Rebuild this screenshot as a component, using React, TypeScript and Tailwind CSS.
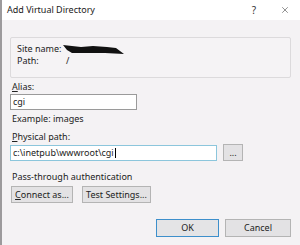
import { X } from 'lucide-react';

const font = { fontFamily: '"Noto Sans", "Open Sans", sans-serif' };

function Btn({ children, w, h = 'h-[17px]', primary }: { children: React.ReactNode; w: string; h?: string; primary?: boolean }) {
  return (
    <div
      className={`${w} ${h} flex items-center justify-center border text-[9px] text-[#222] ${
        primary ? 'border-[#3d8fcb] bg-[#e4e4e6]' : 'border-[#b4b4b4] bg-[#e3e2e4]'
      }`}
    >
      {children}
    </div>
  );
}

export default function App() {
  return (
    <div
      className="flex h-[245px] w-[300px] flex-col border-l-2 border-[#9c9a9c] bg-[#f4f2f4] text-[9px] leading-[12px] text-[#222]"
      style={font}
    >
      {/* Title bar */}
      <div className="flex h-[20px] items-center bg-white pl-[5px] pr-[10px]">
        <span className="text-[9px] text-[#1a1a1a]">Add Virtual Directory</span>
        <span className="ml-auto mr-[24px] text-[10px] text-[#333]">?</span>
        <X className="h-[10px] w-[10px] text-[#333]" strokeWidth={1.3} />
      </div>

      <div className="flex flex-1 flex-col pl-[8px] pr-[9px]">
        {/* Site info group */}
        <div className="mt-[17px] h-[41px] rounded-[2px] border border-[#dcdadc] bg-[#f5f3f5] pl-[6px] pt-[5px]">
          <div className="flex h-[12px] items-center">
            <span className="w-[46px]">Site name:</span>
            <svg width="62" height="10" viewBox="0 0 62 10" className="mt-[1px]">
              <polygon points="0,0 18,2 30,1 44,2 53,3 61,9 42,8 22,8 9,8 4,5" fill="#111" />
            </svg>
          </div>
          <div className="flex h-[12px] items-center">
            <span className="w-[49px]">Path:</span>
            <span>/</span>
          </div>
        </div>

        {/* Alias */}
        <div className="mt-[3px] pl-[2px]">
          <span className="underline underline-offset-1">A</span>lias:
        </div>
        <div className="mt-[1px] flex h-[16px] w-[127px] items-center border border-[#9a9a9a] bg-white pl-[2px]">
          cgi
        </div>
        <div className="mt-[3px] pl-[2px]">Example: images</div>

        {/* Physical path */}
        <div className="mt-[6px] pl-[2px]">
          <span className="underline underline-offset-1">P</span>hysical path:
        </div>
        <div className="mt-[1px] flex items-center gap-[6px]">
          <div className="flex h-[16px] w-[207px] items-center border border-[#8cc6dc] bg-white pl-[2px]">
            c:\inetpub\wwwroot\cgi
            <span className="ml-[1px] inline-block h-[10px] w-px bg-black" />
          </div>
          <Btn w="w-[20px]">...</Btn>
        </div>

        {/* Pass-through */}
        <div className="mt-[10px] pl-[2px]">Pass-through authentication</div>
        <div className="mt-[3px] flex gap-[9px] pl-[1px]">
          <Btn w="w-[62px]">
            <span className="underline underline-offset-1">C</span>onnect as...
          </Btn>
          <Btn w="w-[69px]">Test Settings...</Btn>
        </div>

        {/* Dialog buttons */}
        <div className="mt-[16px] flex justify-end gap-[6px]">
          <Btn w="w-[63px]" h="h-[18px]" primary>
            OK
          </Btn>
          <Btn w="w-[66px]" h="h-[18px]">
            Cancel
          </Btn>
        </div>
      </div>
    </div>
  );
}
